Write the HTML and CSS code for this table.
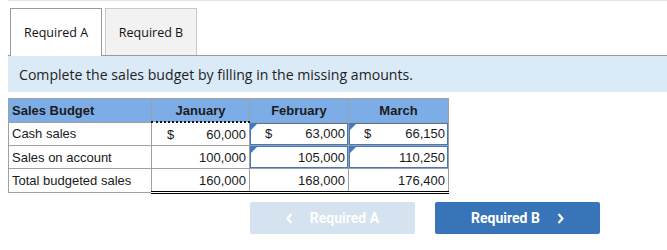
FILE: index.html
```html
<!DOCTYPE html>
<html>
<head>
<meta charset="utf-8">
<link rel="stylesheet" href="styles.css">
</head>
<body>
<div class="page">
  <div class="tabs">
    <div class="tab active">Required A</div>
    <div class="tab">Required B</div>
  </div>
  <div class="info">Complete the sales budget by filling in the missing amounts.</div>
  <table class="budget">
    <colgroup>
      <col class="c-label"><col class="c-jan"><col class="c-feb"><col class="c-mar">
    </colgroup>
    <thead>
      <tr>
        <th class="lbl">Sales Budget</th>
        <th class="jan">January</th>
        <th>February</th>
        <th>March</th>
      </tr>
    </thead>
    <tbody>
      <tr>
        <td class="lbl">Cash sales</td>
        <td><div class="cell"><span>$</span><span>60,000</span></div></td>
        <td class="in"><div class="cell inp"><span>$</span><span>63,000</span></div></td>
        <td class="in"><div class="cell inp"><span>$</span><span>66,150</span></div></td>
      </tr>
      <tr>
        <td class="lbl">Sales on account</td>
        <td><div class="cell"><span></span><span>100,000</span></div></td>
        <td class="in"><div class="cell inp"><span></span><span>105,000</span></div></td>
        <td class="in"><div class="cell inp"><span></span><span>110,250</span></div></td>
      </tr>
      <tr class="total">
        <td class="lbl">Total budgeted sales</td>
        <td class="sum"><div class="cell"><span></span><span>160,000</span></div></td>
        <td class="sum"><div class="cell"><span></span><span>168,000</span></div></td>
        <td class="sum"><div class="cell"><span></span><span>176,400</span></div></td>
      </tr>
    </tbody>
  </table>
  <div class="nav">
    <button class="btn prev"><svg class="chev" width="7" height="11" viewBox="0 0 7 11"><polyline points="5.5,1 1.5,5.5 5.5,10" fill="none" stroke="#fff" stroke-width="2.2"/></svg><span>Required A</span></button>
    <button class="btn next"><span>Required B</span><svg class="chev" width="7" height="11" viewBox="0 0 7 11"><polyline points="1.5,1 5.5,5.5 1.5,10" fill="none" stroke="#fff" stroke-width="2.2"/></svg></button>
  </div>
</div>
</body>
</html>
```
FILE: styles.css
```css
html, body {
  margin: 0;
  padding: 0;
  background: #fff;
}
body {
  padding-left: 8px;
  overflow: hidden;
}
.page {
  border-top: 1px solid #e2e2e2;
}
.tabs {
  display: flex;
  align-items: flex-start;
  gap: 3px;
  padding: 7px 0 0 2px;
  border-bottom: 1px solid #9a9a9a;
  height: 47px;
}
.tab {
  box-sizing: border-box;
  width: 92px;
  height: 47px;
  display: flex;
  align-items: center;
  justify-content: center;
  font-family: "Open Sans", sans-serif;
  font-size: 12.5px;
  color: #111;
  background: #f2f2f2;
  border: 1px solid #c8c8c8;
  border-bottom: none;
}
.tab.active {
  height: 48px;
  background: #fff;
  border-color: #9a9a9a;
  position: relative;
  z-index: 1;
}
.info {
  height: 36px;
  box-sizing: border-box;
  background: #dbeaf7;
  font-family: "Open Sans", sans-serif;
  font-size: 14.1px;
  color: #1e1e1e;
  display: flex;
  align-items: center;
  padding-left: 11px;
}
.budget {
  margin-top: 6px;
  border-collapse: collapse;
  table-layout: fixed;
  width: 441px;
  font-family: "Liberation Sans", Arial, sans-serif;
  font-size: 13px;
  color: #1a1a1a;
}
.c-label { width: 143px; }
.c-jan { width: 98px; }
.c-feb { width: 99px; }
.c-mar { width: 100px; }
.budget th, .budget td {
  border: 1px solid #a0a0a0;
  padding: 0;
  height: 22px;
}
.budget th {
  background: #7dade6;
  font-weight: bold;
  text-align: center;
  color: #1b1b1b;
}
.budget th.lbl {
  text-align: left;
  padding-left: 3px;
}
.budget th.jan {
  border-bottom: 2px dotted #111;
}
.budget td.lbl {
  padding-left: 3px;
}
.cell {
  display: flex;
  justify-content: space-between;
  align-items: center;
  height: 22px;
  padding: 0 3px 0 15px;
  box-sizing: border-box;
}
.inp {
  position: relative;
  border: 1px solid #4179c0;
  padding: 0 2px 0 14px;
}
.inp::before {
  content: "";
  position: absolute;
  left: 0;
  top: 0;
  border-top: 6px solid #3f7bc7;
  border-right: 6px solid transparent;
}
.budget tr.total td {
  height: 21px;
}
.budget td.sum {
  border-top: 1px solid #000;
  border-bottom: 3px double #000;
}
.nav {
  display: flex;
  gap: 20px;
  margin: 8px 0 0 242px;
}
.btn {
  width: 165px;
  height: 32px;
  border: none;
  border-radius: 2px;
  display: flex;
  align-items: center;
  justify-content: center;
  gap: 17px;
  font-family: Roboto, "Liberation Sans", sans-serif;
  font-weight: bold;
  font-size: 14px;
  color: #fff;
  padding: 0;
}
.btn.prev {
  background: #d5e2f0;
}
.btn.next {
  background: #3874b8;
}
.chev {
  display: block;
}
```
